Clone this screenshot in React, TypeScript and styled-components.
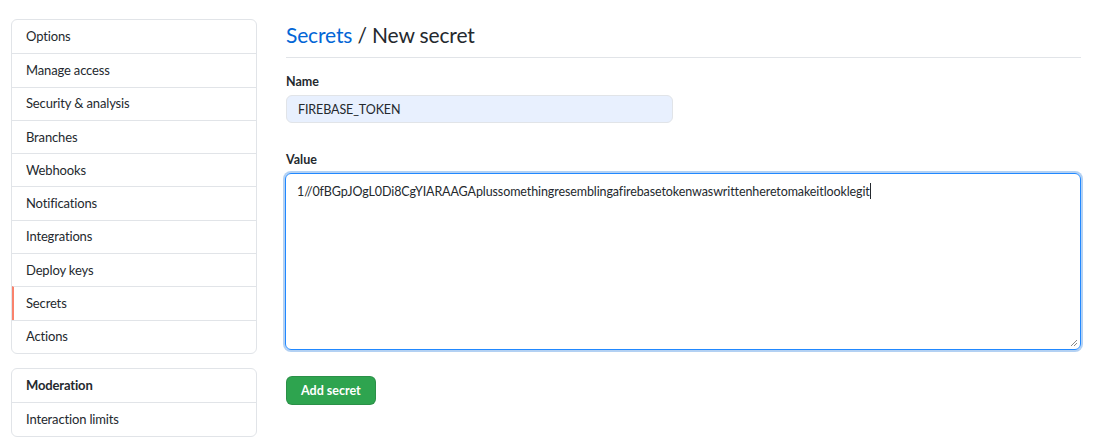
import React from "react";
import styled, { createGlobalStyle } from "styled-components";

const Global = createGlobalStyle`
  html, body { margin: 0; padding: 0; background: #fff; }
  body {
    font-family: Lato, "Noto Sans", "Liberation Sans", sans-serif;
    color: #24292e;
    font-variant-ligatures: none;
  }
  * { box-sizing: border-box; }
`;

const Page = styled.div`
  display: flex;
  gap: 29px;
  padding: 19px 23px 0 11px;
  width: 1104px;
  height: 448px;
`;

const Side = styled.div`
  width: 246px;
  flex: none;
  display: flex;
  flex-direction: column;
  gap: 14px;
`;

const Menu = styled.nav`
  border: 1px solid #e1e4e8;
  border-radius: 6px;
  display: flex;
  flex-direction: column;
  overflow: hidden;
`;

const Item = styled.div<{ $selected?: boolean; $heading?: boolean }>`
  height: 33.3px;
  display: flex;
  align-items: center;
  padding-left: ${(p) => (p.$selected ? "12px" : "14px")};
  padding-bottom: 1px;
  font-size: 13px;
  letter-spacing: -0.15px;
  font-weight: ${(p) => (p.$heading ? 700 : 400)};
  color: #24292e;
  border-left: ${(p) => (p.$selected ? "2px solid #f9826c" : "none")};
  & + & { border-top: 1px solid #e1e4e8; }
`;

const Main = styled.main`
  flex: 1;
  display: flex;
  flex-direction: column;
`;

const Title = styled.h2`
  margin: 0;
  padding: 2px 0 8px;
  font-size: 21px;
  letter-spacing: -0.15px;
  font-weight: 400;
  line-height: 28px;
  border-bottom: 1px solid #e1e4e8;
`;

const Crumb = styled.a`
  color: #0366d6;
  text-decoration: none;
`;

const Label = styled.label`
  display: block;
  font-size: 12.5px;
  font-weight: 700;
  line-height: 18px;
  margin: 15px 0 4px;
`;

const NameInput = styled.div`
  width: 387px;
  height: 28px;
  background: #e8f0fe;
  border: 1px solid #e1e4e8;
  border-radius: 6px;
  display: flex;
  align-items: center;
  padding: 0 11px;
  font-size: 12.5px;
  letter-spacing: -0.1px;
`;

const ValueGroup = styled.div`
  margin-top: 13px;
`;

const ValueArea = styled.div`
  position: relative;
  height: 177px;
  border: 1px solid #2188ff;
  box-shadow: 0 0 0 2px rgba(3, 102, 214, 0.3);
  border-radius: 6px;
  padding: 8px 11px;
  font-size: 12.5px;
  letter-spacing: -0.1px;
  line-height: 20px;
  margin-left: -1px;
`;

const Caret = styled.span`
  display: inline-block;
  width: 1px;
  height: 16px;
  background: #24292e;
  vertical-align: -3px;
`;

const Grip = styled.svg`
  position: absolute;
  right: 2px;
  bottom: 2px;
`;

const Button = styled.button`
  align-self: flex-start;
  margin-top: 26px;
  height: 29px;
  padding: 0 14px;
  background: #2ea44f;
  border: 1px solid rgba(27, 31, 35, 0.15);
  border-radius: 6px;
  color: #fff;
  font-family: inherit;
  font-size: 12.5px;
  font-weight: 700;
`;

const items = [
  "Options",
  "Manage access",
  "Security & analysis",
  "Branches",
  "Webhooks",
  "Notifications",
  "Integrations",
  "Deploy keys",
  "Secrets",
  "Actions",
];

export default function App() {
  return (
    <>
      <Global />
      <Page>
        <Side>
          <Menu>
            {items.map((t) => (
              <Item key={t} $selected={t === "Secrets"}>
                {t}
              </Item>
            ))}
          </Menu>
          <Menu>
            <Item $heading>Moderation</Item>
            <Item>Interaction limits</Item>
          </Menu>
        </Side>
        <Main>
          <Title>
            <Crumb href="#">Secrets</Crumb> / New secret
          </Title>
          <Label>Name</Label>
          <NameInput>FIREBASE_TOKEN</NameInput>
          <ValueGroup>
            <Label>Value</Label>
            <ValueArea>
              1//0fBGpJOgL0Di8CgYIARAAGAplussomethingresemblingafirebasetokenwaswrittenheretomakeitlooklegit
              <Caret />
              <Grip width="8" height="8" viewBox="0 0 8 8">
                <path d="M7 1 L1 7 M7 4 L4 7" stroke="#888" strokeWidth="1" />
              </Grip>
            </ValueArea>
          </ValueGroup>
          <Button>Add secret</Button>
        </Main>
      </Page>
    </>
  );
}
